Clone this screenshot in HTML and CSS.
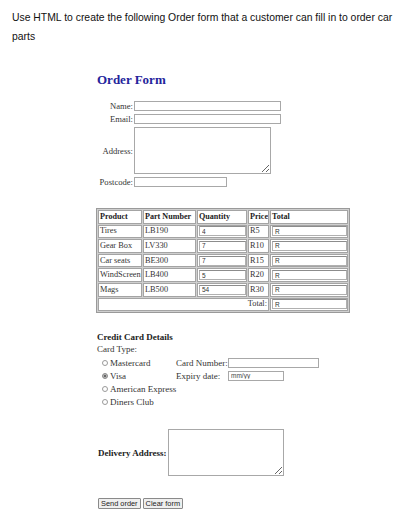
FILE: index.html
```html
<!DOCTYPE html>
<html>
<head>
<meta charset="utf-8">
<title>Order Form</title>
<link rel="stylesheet" href="styles.css">
</head>
<body>
<p class="intro">Use HTML to create the following Order form that a customer can fill in to order car parts</p>
<div class="page">
  <h2 class="title">Order Form</h2>
  <form class="order">
    <div class="fields">
      <label class="lbl">Name:</label><input class="txt w-name" type="text">
      <label class="lbl">Email:</label><input class="txt w-name" type="text">
      <label class="lbl">Address:</label><textarea class="area w-addr"></textarea>
      <label class="lbl">Postcode:</label><input class="txt w-post" type="text">
    </div>

    <table class="parts">
      <colgroup>
        <col class="c1"><col class="c2"><col class="c3"><col class="c4"><col class="c5">
      </colgroup>
      <tr class="head"><th>Product</th><th>Part Number</th><th>Quantity</th><th>Price</th><th>Total</th></tr>
      <tr><td>Tires</td><td>LB190</td><td><input class="cell-in" value="4"></td><td>R5</td><td><input class="cell-in" value="R"></td></tr>
      <tr><td>Gear Box</td><td>LV330</td><td><input class="cell-in" value="7"></td><td>R10</td><td><input class="cell-in" value="R"></td></tr>
      <tr><td>Car seats</td><td>BE300</td><td><input class="cell-in" value="7"></td><td>R15</td><td><input class="cell-in" value="R"></td></tr>
      <tr><td>WindScreen</td><td>LB400</td><td><input class="cell-in" value="5"></td><td>R20</td><td><input class="cell-in" value="R"></td></tr>
      <tr><td>Mags</td><td>LB500</td><td><input class="cell-in" value="54"></td><td>R30</td><td><input class="cell-in" value="R"></td></tr>
      <tr><td colspan="4" class="tot-lbl">Total:</td><td><input class="cell-in" value="R"></td></tr>
    </table>

    <div class="cc">
      <div class="cc-title">Credit Card Details</div>
      <div class="cc-type">Card Type:</div>
      <div class="cc-grid">
        <label class="radio"><input type="radio" name="card" class="rb"> Mastercard</label>
        <div class="cc-field"><span class="cc-lbl">Card Number:</span><input class="txt w-card" type="text"></div>
        <label class="radio"><input type="radio" name="card" class="rb" checked> Visa</label>
        <div class="cc-field"><span class="cc-lbl">Expiry date:</span><input class="txt w-exp" type="text" placeholder="mm/yy"></div>
        <label class="radio span2"><input type="radio" name="card" class="rb"> American Express</label>
        <label class="radio span2"><input type="radio" name="card" class="rb"> Diners Club</label>
      </div>
    </div>

    <div class="delivery">
      <label class="del-lbl">Delivery Address:</label>
      <textarea class="area w-del"></textarea>
    </div>

    <div class="buttons">
      <button type="submit" class="btn">Send order</button>
      <button type="reset" class="btn">Clear form</button>
    </div>
  </form>
</div>
</body>
</html>
```

FILE: styles.css
```css
html, body {
  margin: 0;
  padding: 0;
  background: #ffffff;
}

body {
  font-family: "Liberation Serif", "Times New Roman", serif;
  font-size: 9px;
  color: #222;
}

.intro {
  margin: 0;
  padding: 8px 4px 0 12px;
  font-family: "Liberation Sans", Arial, sans-serif;
  font-size: 10.4px;
  line-height: 19px;
  color: #111;
}

.page {
  padding-left: 97px;
}

.title {
  margin: 26px 0 0 0;
  font-size: 13px;
  line-height: 16px;
  font-weight: bold;
  color: #24249c;
}

.order {
  margin: 0;
}

.fields {
  display: grid;
  grid-template-columns: 36px auto;
  column-gap: 1px;
  row-gap: 3px;
  align-items: center;
  justify-items: start;
  margin-top: 13px;
  width: 190px;
}

.lbl {
  justify-self: end;
  font-size: 8.6px;
  line-height: 10px;
  color: #333;
}

.txt {
  box-sizing: border-box;
  height: 10px;
  margin: 0;
  padding: 0 2px;
  border: 1px solid #a8a8a8;
  background: #fff;
  font-family: "Liberation Sans", Arial, sans-serif;
  font-size: 6.5px;
  color: #333;
  outline: none;
}

.txt::placeholder {
  color: #444;
}

.w-name { width: 147px; }
.w-post { width: 93px; }
.w-card { width: 91px; }
.w-exp { width: 56px; }

.area {
  box-sizing: border-box;
  display: block;
  margin: 0;
  padding: 0;
  border: 1px solid #a8a8a8;
  resize: both;
  background: #fff;
}

.w-addr { width: 137px; height: 47px; }
.w-del { width: 116px; height: 47px; }

.parts {
  margin-top: 21px;
  margin-left: -1px;
  border: 1px solid #9a9a9a;
  border-spacing: 1px;
  border-collapse: separate;
  table-layout: fixed;
  width: 254px;
  background: #cfcfcf;
}

.c1 { width: 44px; }
.c2 { width: 53px; }
.c3 { width: 50px; }
.c4 { width: 21px; }
.c5 { width: 78px; }

.parts th,
.parts td {
  box-sizing: border-box;
  height: 13.6px;
  padding: 0 0 0 1px;
  border: 1px solid #a4a4a4;
  background: #fff;
  font-size: 8.3px;
  line-height: 10px;
  text-align: left;
  white-space: nowrap;
  overflow: hidden;
  color: #333;
}

.parts th {
  font-weight: bold;
  font-size: 8.1px;
  color: #222;
}

.parts td.tot-lbl {
  text-align: right;
  padding-right: 1px;
}

.cell-in {
  box-sizing: border-box;
  display: block;
  width: 100%;
  height: 10px;
  margin: 0;
  padding: 0 2px;
  border: 1px solid #b0b0b0;
  border-top-color: #8c8c8c;
  background: #fff;
  font-family: "Liberation Sans", Arial, sans-serif;
  font-size: 6.5px;
  color: #333;
  outline: none;
}

.cc {
  margin-top: 18px;
}

.cc-title {
  font-weight: bold;
  font-size: 9px;
  line-height: 12px;
  color: #222;
}

.cc-type {
  font-size: 9px;
  line-height: 12px;
  color: #333;
}

.cc-grid {
  display: grid;
  grid-template-columns: 79px auto;
  grid-auto-rows: 13px;
  align-items: center;
  margin-top: 1px;
}

.span2 {
  grid-column: 1 / 3;
}

.radio {
  display: flex;
  align-items: center;
  gap: 1px;
  padding-left: 5px;
  font-size: 9px;
  line-height: 12px;
  color: #333;
  white-space: nowrap;
}

.rb {
  appearance: none;
  -webkit-appearance: none;
  box-sizing: border-box;
  width: 6px;
  height: 6px;
  margin: 0 1px 0 0;
  border: 1px solid #9a9a9a;
  border-radius: 50%;
  background: #fff;
}

.rb:checked {
  background: radial-gradient(circle, #666 0, #666 1.3px, #bdbdbd 1.6px);
  border-color: #888;
}

.cc-field {
  display: flex;
  align-items: center;
  font-size: 9px;
  color: #333;
}

.cc-lbl {
  width: 52px;
  white-space: nowrap;
}

.delivery {
  display: flex;
  align-items: center;
  gap: 1px;
  margin-top: 21px;
}

.del-lbl {
  font-weight: bold;
  font-size: 9px;
  padding-left: 1px;
  white-space: nowrap;
  color: #222;
}

.buttons {
  display: flex;
  gap: 2px;
  margin-top: 22px;
  padding-left: 1px;
}

.btn {
  box-sizing: border-box;
  height: 11px;
  margin: 0;
  padding: 0 2px;
  border: 1px solid #8a8a8a;
  border-radius: 1px;
  background: #efefef;
  font-family: "Liberation Sans", Arial, sans-serif;
  font-size: 7.4px;
  line-height: 9px;
  color: #222;
}
```
